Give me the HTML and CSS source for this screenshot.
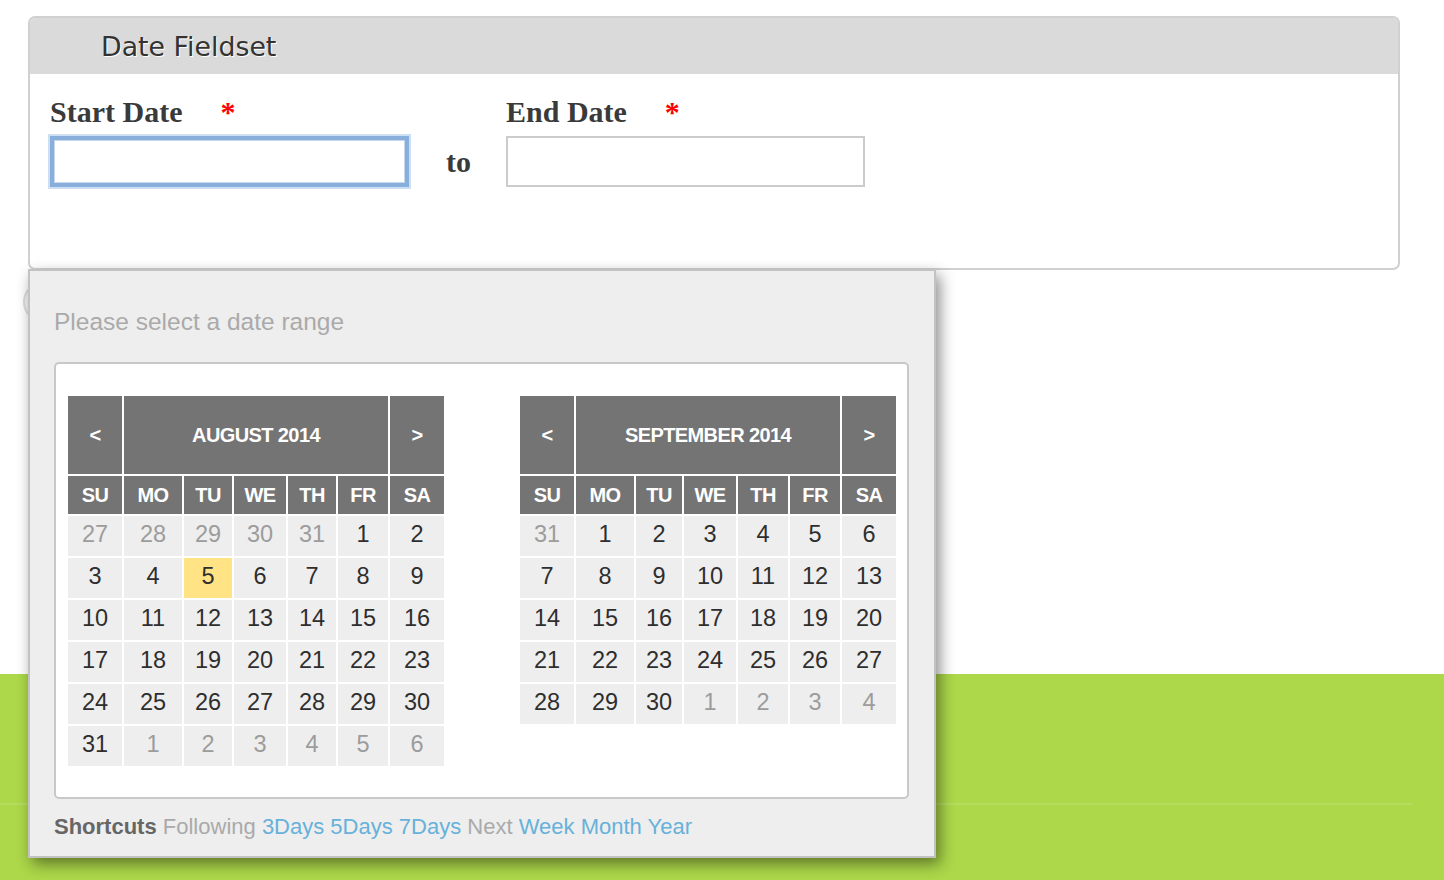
FILE: index.html
```html
<!DOCTYPE html>
<html>
<head>
<meta charset="utf-8">
<link rel="stylesheet" href="styles.css">
</head>
<body>
<div class="fieldset">
  <div class="legend">Date Fieldset</div>
  <div class="fields">
    <div class="field">
      <div class="label">Start Date<span class="req">*</span></div>
      <input class="input focused" type="text">
    </div>
    <div class="to">to</div>
    <div class="field">
      <div class="label">End Date<span class="req">*</span></div>
      <input class="input" type="text">
    </div>
  </div>
</div>
<div class="ghost-btn"></div>
<div class="footer"><div class="footer-line"></div></div>

<div class="picker">
  <div class="picker-title">Please select a date range</div>
  <div class="months">
    <div class="cal aug">
      <div class="hd nav">&lt;</div>
      <div class="hd month">AUGUST 2014</div>
      <div class="hd nav">&gt;</div>
      <div class="dw">SU</div><div class="dw">MO</div><div class="dw">TU</div><div class="dw">WE</div><div class="dw">TH</div><div class="dw">FR</div><div class="dw">SA</div>
      <div class="d o">27</div><div class="d o">28</div><div class="d o">29</div><div class="d o">30</div><div class="d o">31</div><div class="d">1</div><div class="d">2</div>
      <div class="d">3</div><div class="d">4</div><div class="d today">5</div><div class="d">6</div><div class="d">7</div><div class="d">8</div><div class="d">9</div>
      <div class="d">10</div><div class="d">11</div><div class="d">12</div><div class="d">13</div><div class="d">14</div><div class="d">15</div><div class="d">16</div>
      <div class="d">17</div><div class="d">18</div><div class="d">19</div><div class="d">20</div><div class="d">21</div><div class="d">22</div><div class="d">23</div>
      <div class="d">24</div><div class="d">25</div><div class="d">26</div><div class="d">27</div><div class="d">28</div><div class="d">29</div><div class="d">30</div>
      <div class="d">31</div><div class="d o">1</div><div class="d o">2</div><div class="d o">3</div><div class="d o">4</div><div class="d o">5</div><div class="d o">6</div>
    </div>
    <div class="cal sep">
      <div class="hd nav">&lt;</div>
      <div class="hd month">SEPTEMBER 2014</div>
      <div class="hd nav">&gt;</div>
      <div class="dw">SU</div><div class="dw">MO</div><div class="dw">TU</div><div class="dw">WE</div><div class="dw">TH</div><div class="dw">FR</div><div class="dw">SA</div>
      <div class="d o">31</div><div class="d">1</div><div class="d">2</div><div class="d">3</div><div class="d">4</div><div class="d">5</div><div class="d">6</div>
      <div class="d">7</div><div class="d">8</div><div class="d">9</div><div class="d">10</div><div class="d">11</div><div class="d">12</div><div class="d">13</div>
      <div class="d">14</div><div class="d">15</div><div class="d">16</div><div class="d">17</div><div class="d">18</div><div class="d">19</div><div class="d">20</div>
      <div class="d">21</div><div class="d">22</div><div class="d">23</div><div class="d">24</div><div class="d">25</div><div class="d">26</div><div class="d">27</div>
      <div class="d">28</div><div class="d">29</div><div class="d">30</div><div class="d o">1</div><div class="d o">2</div><div class="d o">3</div><div class="d o">4</div>
    </div>
  </div>
  <div class="shortcuts"><b>Shortcuts</b> <span class="muted">Following</span> <span class="lnk">3Days</span> <span class="lnk">5Days</span> <span class="lnk">7Days</span> <span class="muted">Next</span> <span class="lnk">Week</span> <span class="lnk">Month</span> <span class="lnk">Year</span></div>
</div>
</body>
</html>
```

FILE: styles.css
```css
* { box-sizing: border-box; }
html, body { margin: 0; padding: 0; background: #fff; }
body {
  width: 1444px;
  height: 880px;
  overflow: hidden;
  position: relative;
  font-family: "Liberation Sans", Arial, sans-serif;
  padding-top: 16px;
}

.fieldset {
  margin-left: 28px;
  width: 1372px;
  height: 254px;
  border: 2px solid #d0d0d0;
  border-radius: 7px;
  overflow: hidden;
}
.legend {
  height: 56px;
  background: #dadada;
  padding-left: 71px;
  padding-top: 1px;
  line-height: 56px;
  font-family: "DejaVu Sans", sans-serif;
  font-size: 26.8px;
  color: #333;
  text-shadow: 1px 1px 0 #fff;
}
.fields {
  display: flex;
  align-items: flex-end;
  padding: 23px 0 0 20px;
}
.field { display: flex; flex-direction: column; }
.label {
  font-family: "Liberation Serif", "Times New Roman", serif;
  font-weight: bold;
  font-size: 30px;
  line-height: 30px;
  color: #3a3a3a;
  margin-bottom: 9px;
}
.req { color: #ff0000; margin-left: 38px; }
.input {
  width: 359px;
  height: 51px;
  margin: 0;
  border: 2px solid #cccccc;
  background: #fff;
  outline: none;
  display: block;
}
.input.focused {
  border: 4px solid #88afdc;
  box-shadow: inset 0 0 0 1px #c4d7ee, 0 0 0 2px #cddff2;
}
.to {
  font-family: "Liberation Serif", "Times New Roman", serif;
  font-weight: bold;
  font-size: 30px;
  color: #3a3a3a;
  height: 51px;
  line-height: 51px;
  margin: 0 35px 0 37px;
}

.ghost-btn {
  position: absolute;
  left: 23px;
  top: 282px;
  width: 40px;
  height: 40px;
  border-radius: 50%;
  border: 2px solid #dddddd;
  background: #f4f4f4;
}

.footer {
  margin-top: 404px;
  height: 206px;
  background: #acd849;
  padding-top: 129px;
}
.footer-line {
  width: 1412px;
  height: 2px;
  background: #b6dd60;
}

.picker {
  position: absolute;
  left: 28px;
  top: 269px;
  width: 908px;
  height: 589px;
  background: #eeeeee;
  border: 2px solid #c2c2c2;
  box-shadow: 4px 6px 14px rgba(0, 0, 0, 0.45);
  padding: 37px 25px 0 24px;
}
.picker-title {
  font-size: 24.5px;
  line-height: 28px;
  color: #aaaaaa;
}
.months {
  margin-top: 26px;
  height: 437px;
  background: #fff;
  border: 2px solid #c8c8c8;
  border-radius: 5px;
  padding: 32px 11px 0 12px;
  display: flex;
  justify-content: space-between;
  align-items: flex-start;
}
.cal {
  display: grid;
  gap: 2px;
  grid-template-rows: 78px 38px repeat(6, 40px);
  width: 376px;
}
.cal.aug { grid-template-columns: 54px 58px 48px 52px 48px 50px 54px; }
.cal.sep { grid-template-columns: 54px 58px 46px 52px 50px 50px 54px; }
.hd, .dw {
  background: #747474;
  color: #fff;
  font-weight: bold;
  display: flex;
  align-items: center;
  justify-content: center;
  font-size: 20px;
  letter-spacing: -0.6px;
}
.hd.month { grid-column: span 5; }
.d {
  background: #eeeeee;
  color: #2e2e2e;
  font-size: 23.5px;
  display: flex;
  align-items: center;
  justify-content: center;
  padding-bottom: 3px;
}
.d.o { color: #9c9c9c; }
.d.today { background: #ffe385; }

.shortcuts {
  margin-top: 15px;
  font-size: 22px;
  line-height: 26px;
  white-space: nowrap;
}
.shortcuts b { color: #666; }
.muted { color: #aaaaaa; }
.lnk { color: #67b1da; }
```
